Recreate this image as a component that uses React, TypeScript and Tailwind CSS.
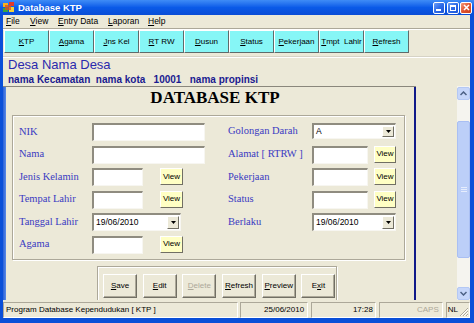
import React from "react";

const U = ({ c }: { c: string }) => <span className="underline underline-offset-[1px]">{c}</span>;

function TitleIcon() {
  return (
    <svg width="12" height="11" viewBox="0 0 12 11">
      <rect x="0" y="1" width="5" height="4" fill="#f7b21d" />
      <rect x="6" y="0" width="5" height="4" fill="#e2392a" />
      <rect x="0" y="6" width="5" height="4" fill="#3aa544" />
      <rect x="6" y="5" width="5" height="5" fill="#f5d23a" />
      <rect x="2" y="3" width="6" height="5" fill="#d9541e" opacity="0.8" />
    </svg>
  );
}

function WinBtn({ kind }: { kind: "min" | "max" | "close" }) {
  const bg =
    kind === "close"
      ? "bg-gradient-to-br from-[#f09a7a] via-[#e0532f] to-[#c8401f]"
      : "bg-gradient-to-br from-[#6a9cf7] via-[#2d6be8] to-[#1d55d6]";
  return (
    <div className={`w-[12px] h-[12px] rounded-[2px] border border-white ${bg} flex items-center justify-center`}>
      {kind === "min" && <div className="w-[5px] h-[2px] bg-white mt-[5px] -ml-[2px]" />}
      {kind === "max" && <div className="w-[6px] h-[6px] border border-white border-t-2" />}
      {kind === "close" && (
        <svg width="7" height="7" viewBox="0 0 7 7">
          <path d="M1 1 L6 6 M6 1 L1 6" stroke="white" strokeWidth="1.6" />
        </svg>
      )}
    </div>
  );
}

function TBtn({ u, rest }: { u: string; rest: string }) {
  return (
    <div className="w-[45px] h-[23px] bg-[#86f6f6] border border-t-white border-l-white border-b-[#5f6b6b] border-r-[#5f6b6b] flex items-center justify-center text-[8px] whitespace-pre">
      <U c={u} />
      {rest}
    </div>
  );
}

function Label({ children }: { children: React.ReactNode }) {
  return (
    <span className="font-['Liberation_Serif',serif] text-[10.5px] text-[#3a3ac2] leading-none whitespace-pre">
      {children}
    </span>
  );
}

function Input({ w }: { w: string }) {
  return (
    <div
      className={`${w} h-[18px] bg-white border-t-2 border-l-2 border-b border-r border-t-[#8f8c80] border-l-[#8f8c80] border-b-[#f7f6f1] border-r-[#f7f6f1]`}
    />
  );
}

function Combo({ w, h, value }: { w: string; h: string; value: string }) {
  return (
    <div
      className={`${w} ${h} bg-white border-t-2 border-l-2 border-b border-r border-t-[#8f8c80] border-l-[#8f8c80] border-b-[#f7f6f1] border-r-[#f7f6f1] flex items-stretch`}
    >
      <span className="pl-[2px] text-[8.5px] leading-none flex items-center flex-1">{value}</span>
      <div className="w-[12px] my-[1px] mr-[1px] bg-[#ece9d8] border border-t-white border-l-white border-b-[#716f64] border-r-[#716f64] flex items-center justify-center">
        <svg width="5" height="3" viewBox="0 0 5 3">
          <path d="M0 0 H5 L2.5 3 Z" fill="#000" />
        </svg>
      </div>
    </div>
  );
}

function ViewBtn({ w }: { w: string }) {
  return (
    <div
      className={`${w} h-[17px] bg-[#ffffc4] border border-t-white border-l-white border-b-[#716f64] border-r-[#716f64] flex items-center justify-center text-[8px] leading-none`}
    >
      View
    </div>
  );
}

function BBtn({ u, rest, pre = "", disabled = false }: { u: string; rest: string; pre?: string; disabled?: boolean }) {
  return (
    <div
      className={`w-[34px] h-[24px] bg-[#ece9d8] border border-t-white border-l-white border-b-[#716f64] border-r-[#716f64] shadow-[inset_-1px_-1px_0_#aca899] flex items-center justify-center text-[8px] leading-none whitespace-pre ${
        disabled ? "text-[#aca899]" : "text-black"
      }`}
    >
      {pre}
      <U c={u} />
      {rest}
    </div>
  );
}

function Row({ children }: { children: React.ReactNode }) {
  return <div className="h-[22.5px] flex items-start">{children}</div>;
}

export default function App() {
  return (
    <div className="w-[474px] h-[323px] overflow-hidden flex flex-col bg-[#0a4fd8] font-['Liberation_Sans',Arial,sans-serif] text-black">
      {/* Title bar */}
      <div className="h-[15px] shrink-0 flex items-center bg-gradient-to-b from-[#3f8cf6] via-[#0a5ae8] to-[#0a4dd6] pl-[3px] pr-[2px]">
        <TitleIcon />
        <span className="ml-[3px] text-white font-bold text-[9.5px] leading-none">Database KTP</span>
        <div className="ml-auto flex items-center">
          <WinBtn kind="min" />
          <div className="w-[2px]" />
          <WinBtn kind="max" />
          <div className="w-[1px]" />
          <WinBtn kind="close" />
        </div>
      </div>

      {/* Window body */}
      <div className="flex-1 min-h-0 flex flex-col ml-[3px] mr-[4px] bg-[#ece9d8]">
        {/* Menu */}
        <div className="h-[13px] shrink-0 flex items-center pl-[3px] text-[8.5px] leading-none">
          <span className="w-[24px]"><U c="F" />ile</span>
          <span className="w-[28px]"><U c="V" />iew</span>
          <span className="w-[50px]"><U c="E" />ntry Data</span>
          <span className="w-[40px]"><U c="L" />aporan</span>
          <span><U c="H" />elp</span>
        </div>
        {/* Toolbar */}
        <div className="h-[2px] shrink-0 border-t border-t-[#aca899] border-b border-b-white" />
        <div className="h-[23px] shrink-0 flex pl-[1px]">
          <TBtn u="K" rest="TP" />
          <TBtn u="A" rest="gama" />
          <TBtn u="J" rest="ns Kel" />
          <TBtn u="R" rest="T RW" />
          <TBtn u="D" rest="usun" />
          <TBtn u="S" rest="tatus" />
          <TBtn u="P" rest="ekerjaan" />
          <TBtn u="T" rest="mpt  Lahir" />
          <TBtn u="R" rest="efresh" />
        </div>
        <div className="h-[3px] shrink-0" />
        <div className="h-[2px] shrink-0 border-t border-t-[#d6d3c6] border-b border-b-white" />
        {/* Header */}
        <div className="h-[28px] shrink-0 pl-[5px] flex flex-col">
          <div className="h-[12px] flex items-center leading-none" style={{ fontSize: "13px", color: "#2a2aae" }}>
            Desa Nama Desa
          </div>
          <div className="h-[16px] flex items-center text-[10px] font-bold text-[#1a1a90] leading-none whitespace-pre pt-[3px]">
            {"nama Kecamatan  nama kota   10001   nama propinsi"}
          </div>
        </div>

        {/* Middle */}
        <div className="h-[214px] shrink-0 flex">
          {/* scroll panel */}
          <div className="w-[413px] h-full flex border-t border-t-[#8a877c]">
            <div className="w-[3px] h-full bg-gradient-to-r from-[#2a60d8] to-[#5a8ae6]" />
            <div className="flex-1 h-full overflow-hidden flex flex-col">
              <div className="h-[20px] shrink-0 pt-[2px] pl-[10px] text-center font-['Liberation_Serif',serif] font-bold text-[17px] leading-[18px]">
                DATABASE KTP
              </div>
              {/* Group box */}
              <div className="mt-[8px] ml-[6px] w-[393px] h-[145px] shrink-0 border border-[#aca899] shadow-[inset_1px_1px_0_#fff,1px_1px_0_#fff] pt-[7px] pl-[6px] flex">
                <div className="flex flex-col">
                  <Row>
                    <div className="w-[73px] h-[18px] flex items-center"><Label>NIK</Label></div>
                    <Input w="w-[113px]" />
                  </Row>
                  <Row>
                    <div className="w-[73px] h-[18px] flex items-center"><Label>Nama</Label></div>
                    <Input w="w-[113px]" />
                  </Row>
                  <Row>
                    <div className="w-[73px] h-[18px] flex items-center"><Label>Jenis Kelamin</Label></div>
                    <Input w="w-[51px]" />
                    <div className="ml-[17px]"><ViewBtn w="w-[23px]" /></div>
                  </Row>
                  <Row>
                    <div className="w-[73px] h-[18px] flex items-center"><Label>Tempat Lahir</Label></div>
                    <Input w="w-[51px]" />
                    <div className="ml-[17px]"><ViewBtn w="w-[23px]" /></div>
                  </Row>
                  <Row>
                    <div className="w-[73px] h-[18px] flex items-center"><Label>Tanggal Lahir</Label></div>
                    <Combo w="w-[89px]" h="h-[18px]" value="19/06/2010" />
                  </Row>
                  <Row>
                    <div className="w-[73px] h-[18px] flex items-center"><Label>Agama</Label></div>
                    <Input w="w-[51px]" />
                    <div className="ml-[17px]"><ViewBtn w="w-[23px]" /></div>
                  </Row>
                </div>
                <div className="ml-[23px] flex flex-col">
                  <Row>
                    <div className="w-[84px] h-[16px] flex items-center"><Label>Golongan Darah</Label></div>
                    <Combo w="w-[84px]" h="h-[16px]" value="A" />
                  </Row>
                  <Row>
                    <div className="w-[84px] h-[18px] flex items-center"><Label>Alamat [ RTRW ]</Label></div>
                    <Input w="w-[56px]" />
                    <div className="ml-[6px]"><ViewBtn w="w-[22px]" /></div>
                  </Row>
                  <Row>
                    <div className="w-[84px] h-[18px] flex items-center"><Label>Pekerjaan</Label></div>
                    <Input w="w-[56px]" />
                    <div className="ml-[6px]"><ViewBtn w="w-[22px]" /></div>
                  </Row>
                  <Row>
                    <div className="w-[84px] h-[18px] flex items-center"><Label>Status</Label></div>
                    <Input w="w-[56px]" />
                    <div className="ml-[6px]"><ViewBtn w="w-[22px]" /></div>
                  </Row>
                  <Row>
                    <div className="w-[84px] h-[18px] flex items-center"><Label>Berlaku</Label></div>
                    <Combo w="w-[84px]" h="h-[18px]" value="19/06/2010" />
                  </Row>
                </div>
              </div>
              {/* Buttons box */}
              <div className="mt-[6px] ml-[91px] w-[240px] h-[45px] shrink-0 border border-[#aca899] shadow-[inset_1px_1px_0_#fff,1px_1px_0_#fff] pt-[7px] pl-[5px] flex gap-[5.7px]">
                <BBtn u="S" rest="ave" />
                <BBtn u="E" rest="dit" />
                <BBtn u="D" rest="elete" disabled />
                <BBtn u="R" rest="efresh" />
                <BBtn u="P" rest="review" />
                <BBtn pre="E" u="x" rest="it" />
              </div>
            </div>
            <div className="w-[2px] h-full bg-[#101a8a]" />
          </div>
          <div className="flex-1" />
          {/* Scrollbar */}
          <div className="w-[13px] h-full pt-[1px] flex flex-col bg-[#f5f4ef]">
            <div className="h-[13px] shrink-0 rounded-[2px] bg-[#c6d6fa] border border-[#b4c8f4] flex items-center justify-center">
              <svg width="7" height="5" viewBox="0 0 7 5">
                <path d="M0.5 4 L3.5 1 L6.5 4" stroke="#4d6185" strokeWidth="1.5" fill="none" />
              </svg>
            </div>
            <div className="h-[21px] shrink-0" />
            <div className="h-[137px] shrink-0 rounded-[2px] bg-[#bccff8] border border-[#a9bff3] flex items-center justify-center">
              <div className="flex flex-col gap-[1px]">
                <div className="w-[6px] h-[1px] bg-[#e6edfd]" />
                <div className="w-[6px] h-[1px] bg-[#e6edfd]" />
                <div className="w-[6px] h-[1px] bg-[#e6edfd]" />
              </div>
            </div>
            <div className="flex-1" />
            <div className="h-[13px] shrink-0 rounded-[2px] bg-[#c6d6fa] border border-[#b4c8f4] flex items-center justify-center">
              <svg width="7" height="5" viewBox="0 0 7 5">
                <path d="M0.5 1 L3.5 4 L6.5 1" stroke="#4d6185" strokeWidth="1.5" fill="none" />
              </svg>
            </div>
          </div>
        </div>

        {/* Status bar */}
        <div className="h-[18px] shrink-0 pt-[2px] flex text-[8px] leading-none">
          <div className="w-[236px] h-[16px] border border-t-[#aca899] border-l-[#aca899] border-b-white border-r-white flex items-center pl-[2px] whitespace-pre">
            Program Database Kependudukan [ KTP ]
          </div>
          <div className="w-[68px] ml-[2px] h-[16px] border border-t-[#aca899] border-l-[#aca899] border-b-white border-r-white flex items-center justify-end pr-[3px]">
            25/06/2010
          </div>
          <div className="w-[65px] ml-[3px] h-[16px] border border-t-[#aca899] border-l-[#aca899] border-b-white border-r-white flex items-center justify-end pr-[2px]">
            17:28
          </div>
          <div className="w-[64px] ml-[3px] h-[16px] border border-t-[#aca899] border-l-[#aca899] border-b-white border-r-white flex items-center justify-end pr-[3px] text-[#aca899]">
            CAPS
          </div>
          <div className="flex-1 ml-[3px] h-[16px] border border-t-[#aca899] border-l-[#aca899] border-b-white border-r-white flex items-center pl-[1px]">
            NL
            <svg className="ml-auto self-end" width="11" height="11" viewBox="0 0 11 11">
              <path d="M10 2 L2 10 M10 5 L5 10 M10 8 L8 10" stroke="#aca899" strokeWidth="1" />
              <path d="M10 3 L3 10 M10 6 L6 10 M10 9 L9 10" stroke="#fff" strokeWidth="1" />
            </svg>
          </div>
        </div>
      </div>
      <div className="h-[5px] shrink-0" />
    </div>
  );
}
